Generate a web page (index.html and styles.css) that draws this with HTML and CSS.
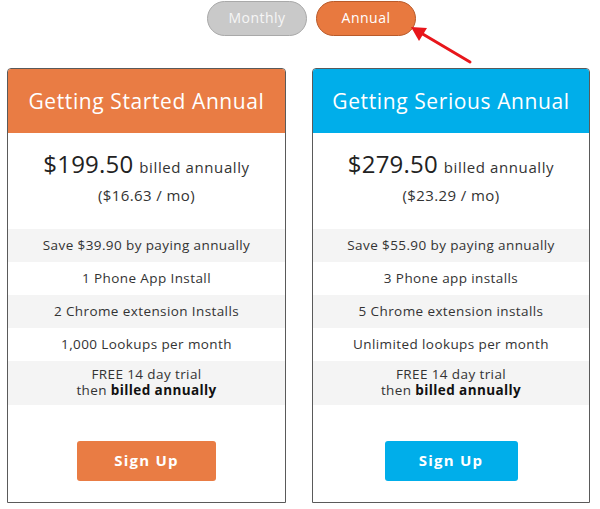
FILE: index.html
```html
<!DOCTYPE html>
<html>
<head>
<meta charset="utf-8">
<link rel="stylesheet" href="styles.css">
</head>
<body>
<div class="page">
  <div class="toggle">
    <div class="pill pill-off">Monthly</div>
    <div class="pill pill-on">Annual</div>
  </div>
  <svg class="arrow" width="80" height="60" viewBox="400 15 80 60">
    <line x1="470" y1="62" x2="421" y2="33" stroke="#e8161b" stroke-width="3" stroke-linecap="round"/>
    <polygon points="411,27 427,28 419,41" fill="#e8161b"/>
  </svg>
  <div class="cards">
    <div class="card">
      <div class="head head-orange">Getting Started Annual</div>
      <div class="price">
        <div class="price-line"><span class="amount">$199.50</span> <span class="billed">billed annually</span></div>
        <div class="permo">($16.63 / mo)</div>
      </div>
      <div class="row alt">Save $39.90 by paying annually</div>
      <div class="row">1 Phone App Install</div>
      <div class="row alt">2 Chrome extension Installs</div>
      <div class="row">1,000 Lookups per month</div>
      <div class="row-tall alt">FREE 14 day trial<br>then <b>billed annually</b></div>
      <div class="foot"><div class="btn btn-orange">Sign Up</div></div>
    </div>
    <div class="card card-two">
      <div class="head head-blue">Getting Serious Annual</div>
      <div class="price">
        <div class="price-line"><span class="amount">$279.50</span> <span class="billed">billed annually</span></div>
        <div class="permo">($23.29 / mo)</div>
      </div>
      <div class="row alt">Save $55.90 by paying annually</div>
      <div class="row">3 Phone app installs</div>
      <div class="row alt">5 Chrome extension installs</div>
      <div class="row">Unlimited lookups per month</div>
      <div class="row-tall alt">FREE 14 day trial<br>then <b>billed annually</b></div>
      <div class="foot"><div class="btn btn-blue">Sign Up</div></div>
    </div>
  </div>
</div>
</body>
</html>
```
FILE: styles.css
```css
html, body {
  margin: 0;
  padding: 0;
  background: #ffffff;
}
body {
  font-family: "Open Sans", "Noto Sans", sans-serif;
  color: #333;
}
.page {
  position: relative;
  width: 600px;
  height: 509px;
}
.toggle {
  display: flex;
  gap: 9px;
  padding: 1px 0 0 207px;
}
.pill {
  box-sizing: border-box;
  width: 100px;
  height: 35px;
  border-radius: 17.5px;
  display: flex;
  align-items: center;
  justify-content: center;
  padding-bottom: 2px;
  font-size: 14px;
  color: #fff;
  letter-spacing: 0.5px;
}
.pill-off {
  background: #c9c9c9;
  border: 1px solid #a9a9a9;
  color: #f6f6f6;
}
.pill-on {
  background: #e8793f;
  border: 1px solid #b95a2a;
}
.arrow {
  position: absolute;
  left: 400px;
  top: 15px;
}
.cards {
  display: flex;
  gap: 26px;
  margin-top: 32px;
  padding-left: 7px;
}
.card {
  box-sizing: border-box;
  width: 279px;
  height: 435px;
  border: 1px solid #5a5a5a;
  border-radius: 4px 4px 0 0;
  display: flex;
  flex-direction: column;
  overflow: hidden;
}
.card-two {
  width: 278px;
}
.head {
  height: 64px;
  display: flex;
  align-items: center;
  justify-content: center;
  color: #fff;
  font-size: 21px;
  letter-spacing: 0.6px;
}
.head-orange { background: #e97c44; }
.head-blue { background: #00aeea; }
.price {
  height: 96px;
  display: flex;
  flex-direction: column;
  align-items: center;
  padding-top: 14px;
  box-sizing: border-box;
  color: #222;
}
.price-line {
  height: 32px;
  display: flex;
  align-items: baseline;
  gap: 6px;
}
.amount {
  font-size: 24px;
  letter-spacing: 0.2px;
}
.billed {
  font-size: 15px;
  color: #333;
  letter-spacing: 0.6px;
}
.permo {
  margin-top: 6px;
  font-size: 15px;
  color: #333;
  letter-spacing: 0.4px;
}
.row {
  box-sizing: border-box;
  height: 33px;
  padding-bottom: 2px;
  display: flex;
  align-items: center;
  justify-content: center;
  text-align: center;
  font-size: 13.5px;
  color: #333;
  letter-spacing: 0.4px;
}
.alt { background: #f4f4f4; }
.row-tall {
  box-sizing: border-box;
  height: 44px;
  padding-top: 5px;
  line-height: 16px;
  text-align: center;
  font-size: 13.5px;
  color: #333;
  letter-spacing: 0.4px;
}
.row-tall b { font-weight: 700; color: #111; }
.foot {
  flex: 1;
  display: flex;
  justify-content: center;
  padding-top: 36px;
}
.btn {
  box-sizing: border-box;
  width: 139px;
  height: 40px;
  padding-bottom: 2px;
  border-radius: 3px;
  display: flex;
  align-items: center;
  justify-content: center;
  color: #fff;
  font-weight: 700;
  font-size: 15px;
  letter-spacing: 1.2px;
}
.btn-orange { background: #e97c44; }
.btn-blue { background: #00aeea; width: 133px; }
```
